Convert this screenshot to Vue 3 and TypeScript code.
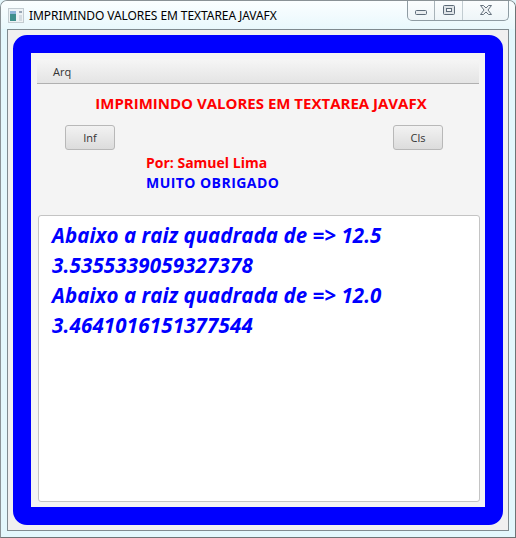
<script setup lang="ts">
const lines: string[] = [
  'Abaixo a raiz quadrada de => 12.5',
  '3.5355339059327378',
  'Abaixo a raiz quadrada de => 12.0',
  '3.4641016151377544',
]
</script>

<template>
  <div class="window">
    <header class="titlebar">
      <svg class="app-icon" width="16" height="16" viewBox="0 0 16 16">
        <rect x="0.5" y="0.5" width="15" height="14" fill="#eef3f5" stroke="#c3ccd1" />
        <rect x="2" y="3" width="6" height="10" fill="#3f8f8c" />
        <rect x="2" y="3" width="6" height="3" fill="#8fb4d8" />
        <rect x="11" y="3" width="3" height="2" fill="#9aa7b4" />
        <rect x="11" y="7" width="3" height="6" fill="#d5dde2" />
      </svg>
      <span class="title">IMPRIMINDO VALORES EM TEXTAREA JAVAFX</span>
      <div class="controls">
        <div class="ctl ctl-min"><svg width="12" height="5" viewBox="0 0 12 5"><rect x="0.5" y="0.5" width="11" height="4" rx="1" fill="#e8ecef" stroke="#5d6b78" /></svg></div>
        <div class="ctl ctl-max"><svg width="12" height="10" viewBox="0 0 12 10"><rect x="0.5" y="0.5" width="11" height="9" rx="1" fill="#dfe4e8" stroke="#5d6b78" /><rect x="3.500" y="3.500" width="5" height="3" fill="#f4f6f8" stroke="#5d6b78" /></svg></div>
        <div class="ctl ctl-close"><svg width="12" height="10" viewBox="0 0 12 10"><path d="M0.500 0.500h3l2.500 2.500 2.500-2.500h3L8 5l3.500 4.500h-3L6 7 3.500 9.500h-3L4 5z" fill="#eef1f3" stroke="#66727e" /></svg></div>
      </div>
    </header>
    <div class="client">
      <div class="stage">
        <nav class="menubar"><span class="menu-item">Arq</span></nav>
        <h1 class="heading">IMPRIMINDO VALORES EM TEXTAREA JAVAFX</h1>
        <div class="buttons">
          <button class="fx-btn" type="button">Inf</button>
          <button class="fx-btn" type="button">Cls</button>
        </div>
        <div class="labels">
          <div class="lbl-red">Por: Samuel Lima</div>
          <div class="lbl-blue">MUITO OBRIGADO</div>
        </div>
        <div class="textarea">
          <div v-for="(line, i) in lines" :key="i" class="line" :class="{ num: i % 2 === 1 }">{{ line }}</div>
        </div>
      </div>
    </div>
  </div>
</template>

<style>
html, body { margin: 0; padding: 0; background: #e4f6fb; }
</style>

<style scoped>
.window {
  width: 516px;
  height: 538px;
  box-sizing: border-box;
  padding: 0 6px 6px;
  background: #e3f7fc;
  border: 1px solid #8a9296;
  border-radius: 7px 7px 0 0;
  border-right-color: #6e7476;
  border-bottom-color: #6e7476;
  display: flex;
  flex-direction: column;
  font-family: "Open Sans", "Noto Sans", sans-serif;
  overflow: hidden;
}
.titlebar {
  height: 28px;
  flex: none;
  display: flex;
  align-items: flex-start;
  background: linear-gradient(#fbfeff, #e9f8fc);
  margin: 0 -6px;
  padding: 0 7px;
}
.app-icon { margin: 7px 5px 0 0; flex: none; }
.title {
  font-size: 12px;
  line-height: 16px;
  margin-top: 7px;
  color: #000;
  white-space: nowrap;
  font-family: "Noto Sans", "Open Sans", sans-serif;
  letter-spacing: -0.07px;
}
.controls {
  margin-left: auto;
  margin-right: -1px;
  margin-top: -1px;
  height: 20px;
  display: flex;
  border: 1px solid #8f9ca3;
  border-top: none;
  border-radius: 0 0 5px 5px;
  background: linear-gradient(#fbfdfe, #eef5f8);
}
.ctl { display: flex; align-items: center; justify-content: center; }
.ctl-min { width: 26px; border-right: 1px solid #a8b3b9; }
.ctl-min svg { margin-top: 5px; }
.ctl-max { width: 27px; border-right: 1px solid #c2ccd1; }
.ctl-close { width: 45px; }
.client {
  flex: 1;
  min-height: 0;
  box-sizing: border-box;
  background: #f0f0f0;
  border: 1px solid #7f8a8f;
  padding: 5px;
  display: flex;
}
.stage {
  flex: 1;
  min-width: 0;
  box-sizing: border-box;
  border: 18px solid #0000ff;
  border-radius: 14px;
  background: #f4f4f4;
  background-clip: padding-box;
  padding: 6px 6px 5px;
  display: flex;
  flex-direction: column;
}
.menubar {
  height: 24px;
  flex: none;
  background: linear-gradient(#f6f6f6, #e4e4e4);
  border-bottom: 1px solid #b0b0b0;
  display: flex;
  align-items: center;
  padding-left: 16px;
}
.menu-item { font-size: 11px; color: #333; }
.heading {
  margin: 9px 0 0;
  padding-left: 6px;
  font-size: 15px;
  line-height: 20px;
  font-weight: 700;
  color: #ff0000;
  text-align: center;
  white-space: nowrap;
}
.buttons {
  display: flex;
  justify-content: space-between;
  margin-top: 12px;
  padding: 0 36px 0 28px;
}
.fx-btn {
  width: 50px;
  height: 25px;
  padding: 0;
  box-sizing: border-box;
  border: 1px solid #b8b8b8;
  border-radius: 3px;
  background: linear-gradient(#f2f2f2, #dcdcdc);
  font-family: inherit;
  font-size: 11px;
  color: #333;
}
.labels {
  margin-top: 3px;
  padding-left: 109px;
  font-size: 14px;
  line-height: 20px;
  font-weight: 700;
}
.lbl-red { color: #ff0000; }
.lbl-blue { color: #0000ff; letter-spacing: 0.45px; }
.textarea {
  margin: 22px 0 0 1px;
  flex: 1;
  min-height: 0;
  box-sizing: border-box;
  background: #fff;
  border: 1px solid #c4c4c4;
  border-radius: 3px;
  padding: 4px 13px;
  width: 442px;
}
.line {
  font-size: 20.5px;
  line-height: 30px;
  font-weight: 700;
  font-style: italic;
  color: #0000ff;
  white-space: nowrap;
  letter-spacing: 0.06px;
}
.line.num { letter-spacing: 0.17px; }
</style>
